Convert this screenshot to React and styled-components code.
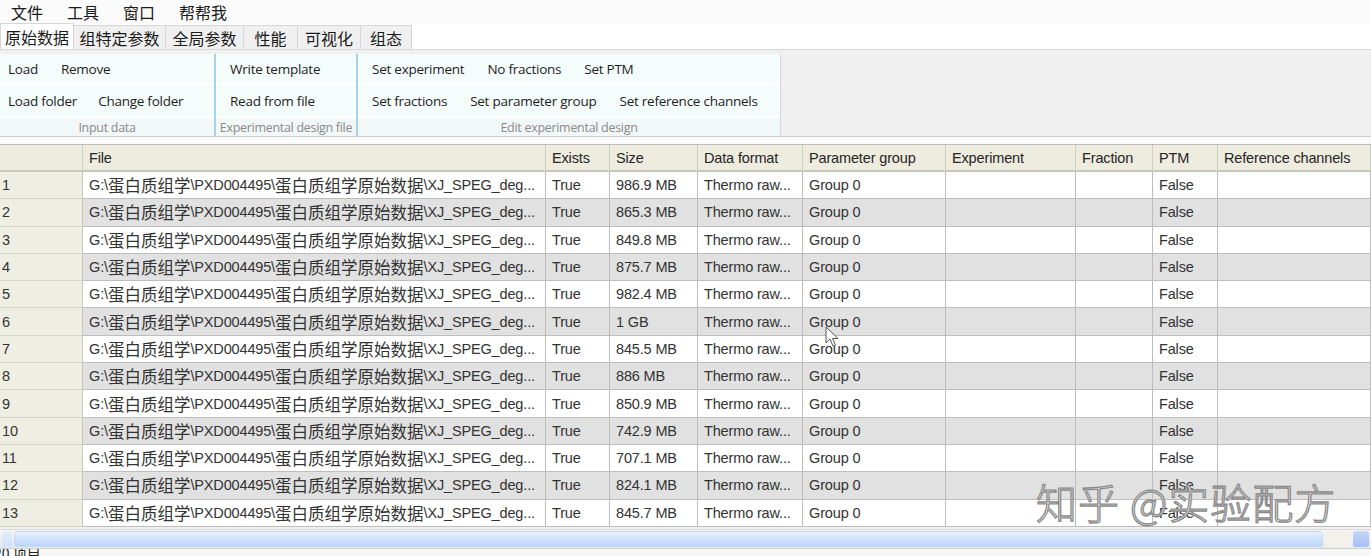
import styled, { createGlobalStyle } from 'styled-components';

const GlobalStyle = createGlobalStyle`
  html, body {
    margin: 0;
    padding: 0;
    overflow: hidden;
    background: #f0f0f0;
  }
  * { box-sizing: border-box; }
  body {
    font-family: "Liberation Sans", "Noto Sans CJK SC", sans-serif;
    color: #222;
  }
`;

const Window = styled.div`
  width: 1371px;
  height: 556px;
  display: flex;
  flex-direction: column;
  position: relative;
  overflow: hidden;
  background: #f0f0f0;
`;

const MenuBar = styled.div`
  height: 24px;
  display: flex;
  align-items: center;
  padding-left: 11px;
  gap: 24px;
  background: #fbfbfb;
  font-family: "Noto Sans CJK SC", sans-serif;
  font-size: 16px;
  color: #1a1a1a;
`;

const MenuItem = styled.span`
  line-height: 1;
`;

const TabStrip = styled.div`
  height: 26px;
  display: flex;
  align-items: flex-end;
  background: #fff;
  border-bottom: 1px solid #d8d8d8;
`;

const Tab = styled.div`
  width: ${p => p.$w}px;
  height: ${p => (p.$active ? '26px' : '24px')};
  display: flex;
  align-items: center;
  justify-content: center;
  font-family: "Noto Sans CJK SC", sans-serif;
  font-size: 16px;
  color: #1a1a1a;
  background: ${p => (p.$active ? '#fff' : '#f0f0f0')};
  border: 1px solid #d6d6d6;
  border-bottom: none;
  margin-right: -1px;
  white-space: nowrap;
`;

const Ribbon = styled.div`
  height: 87px;
  display: flex;
  padding-top: 4px;
  background: #f0f0f0;
  border-bottom: 1px solid #cfcfcf;
`;

const Group = styled.div`
  width: ${p => p.$w}px;
  display: flex;
  flex-direction: column;
  background: #f5fcfc;
  border-right: ${p => (p.$last ? '1px solid #d8d8d8' : '2px solid #a9d2e6')};
`;

const ButtonRow = styled.div`
  height: 32px;
  display: flex;
  align-items: center;
  gap: ${p => p.$gap}px;
  padding-left: ${p => p.$pl}px;
  border-bottom: 3px solid #fdfefe;
  font-family: "Open Sans", sans-serif;
  font-size: 13.5px;
  letter-spacing: -0.25px;
  color: #1e1e1e;
  white-space: nowrap;
`;

const GroupLabel = styled.div`
  flex: 1;
  display: flex;
  align-items: center;
  justify-content: center;
  font-family: "Open Sans", sans-serif;
  font-size: 12.5px;
  letter-spacing: -0.3px;
  color: #8a8a8a;
  white-space: nowrap;
  overflow: hidden;
  background: #f2f7f7;
`;

const Gap = styled.div`
  height: 8px;
  background: #fafafa;
  border-bottom: 1px solid #bdbdbd;
`;

const COLS = '83px 463px 64px 88px 105px 143px 130px 77px 65px 153px';

const Grid = styled.div`
  display: grid;
  grid-template-columns: ${COLS};
  grid-template-rows: 27px;
  grid-auto-rows: 27.3px;
  font-family: "Liberation Sans", "Noto Sans CJK SC", sans-serif;
  font-size: 14.5px;
  letter-spacing: -0.15px;
  color: #333;
`;

const HeadCell = styled.div`
  display: flex;
  align-items: center;
  padding-left: 6px;
  background: #eeecde;
  border-right: 1px solid #d0cec0;
  border-bottom: 2px solid #c9c7b8;
  color: #262626;
  white-space: nowrap;
  overflow: hidden;
`;

const RowHead = styled.div`
  display: flex;
  align-items: center;
  padding-left: 2px;
  background: #efeee3;
  border-right: 1px solid #c9c7b8;
  border-bottom: 1px solid #d6d4c6;
  color: #333;
`;

const Cell = styled.div`
  display: flex;
  align-items: center;
  padding-left: 6px;
  background: ${p => (p.$alt ? '#e1e1e1' : '#ffffff')};
  border-right: 1px solid #bdbdbd;
  border-bottom: 1px solid #bdbdbd;
  white-space: nowrap;
  overflow: hidden;
`;

const Cjk = styled.span`
  font-family: "Noto Sans CJK SC", sans-serif;
  font-size: 16.5px;
  letter-spacing: 0;
`;

const ScrollBar = styled.div`
  height: 19px;
  margin-top: 2px;
  display: flex;
  align-items: stretch;
  padding: 1px 2px;
  gap: 2px;
  background: linear-gradient(#f6f6f6, #e9e9e9);
  border-top: 1px solid #d9d9d9;
`;

const ScrollArrow = styled.div`
  width: ${p => p.$w}px;
  border-radius: 2px;
  background: ${p => p.$blue
    ? 'linear-gradient(#c4d6fb, #a8bff2)'
    : 'linear-gradient(#e4eefc, #cfe0f8)'};
`;

const ScrollThumb = styled.div`
  flex: 1;
  border-radius: 3px;
  background: linear-gradient(#e8f2fe, #cfe2fb 50%, #bcd5f8);
  border: 1px solid #c4d8f4;
`;

const ScrollTrack = styled.div`
  width: 26px;
  background: #f2f1ec;
`;

const StatusBar = styled.div`
  flex: 1;
  font-family: "Noto Sans CJK SC", sans-serif;
  font-size: 14px;
  line-height: 14px;
  color: #222;
  background: #f7f7f7;
  border-top: 1px solid #cfcfcf;
  overflow: hidden;
`;

const StatusText = styled.div`
  margin-top: -3px;
  margin-left: -6px;
`;

const Watermark = styled.div`
  position: absolute;
  left: 1036px;
  top: 471px;
  font-family: "Noto Sans CJK SC", sans-serif;
  font-size: 41px;
  font-weight: 300;
  letter-spacing: 1px;
  color: rgba(255, 255, 255, 0.92);
  -webkit-text-stroke: 1.3px #8a8a8a;
  white-space: nowrap;
  pointer-events: none;
`;

const Cursor = styled.svg`
  position: absolute;
  left: 825px;
  top: 326px;
`;

const sizes = ['986.9 MB', '865.3 MB', '849.8 MB', '875.7 MB', '982.4 MB', '1 GB', '845.5 MB',
  '886 MB', '850.9 MB', '742.9 MB', '707.1 MB', '824.1 MB', '845.7 MB'];

const headers = ['', 'File', 'Exists', 'Size', 'Data format', 'Parameter group', 'Experiment',
  'Fraction', 'PTM', 'Reference channels'];

const FilePath = () => (
  <>
    G:\<Cjk>蛋白质组学</Cjk>\PXD004495\<Cjk>蛋白质组学原始数据</Cjk>\XJ_SPEG_deg...
  </>
);

export default function App() {
  return (
    <Window>
      <GlobalStyle />
      <MenuBar>
        <MenuItem>文件</MenuItem>
        <MenuItem>工具</MenuItem>
        <MenuItem>窗口</MenuItem>
        <MenuItem>帮帮我</MenuItem>
      </MenuBar>
      <TabStrip>
        <Tab $active $w={74}>原始数据</Tab>
        <Tab $w={93}>组特定参数</Tab>
        <Tab $w={79}>全局参数</Tab>
        <Tab $w={55}>性能</Tab>
        <Tab $w={64}>可视化</Tab>
        <Tab $w={52}>组态</Tab>
      </TabStrip>
      <Ribbon>
        <Group $w={216}>
          <ButtonRow $pl={8} $gap={23}><span>Load</span><span>Remove</span></ButtonRow>
          <ButtonRow $pl={8} $gap={21}><span>Load folder</span><span>Change folder</span></ButtonRow>
          <GroupLabel>Input data</GroupLabel>
        </Group>
        <Group $w={142}>
          <ButtonRow $pl={14} $gap={0}><span>Write template</span></ButtonRow>
          <ButtonRow $pl={14} $gap={0}><span>Read from file</span></ButtonRow>
          <GroupLabel>Experimental design file</GroupLabel>
        </Group>
        <Group $w={423} $last>
          <ButtonRow $pl={14} $gap={23}><span>Set experiment</span><span>No fractions</span><span>Set PTM</span></ButtonRow>
          <ButtonRow $pl={14} $gap={23}><span>Set fractions</span><span>Set parameter group</span><span>Set reference channels</span></ButtonRow>
          <GroupLabel>Edit experimental design</GroupLabel>
        </Group>
      </Ribbon>
      <Gap />
      <Grid>
        {headers.map((h, i) => <HeadCell key={i}>{h}</HeadCell>)}
        {sizes.map((size, r) => {
          const alt = r % 2 === 1;
          return [
            <RowHead key={`h${r}`}>{r + 1}</RowHead>,
            <Cell key={`f${r}`} $alt={alt}><FilePath /></Cell>,
            <Cell key={`e${r}`} $alt={alt}>True</Cell>,
            <Cell key={`s${r}`} $alt={alt}>{size}</Cell>,
            <Cell key={`d${r}`} $alt={alt}>Thermo raw...</Cell>,
            <Cell key={`g${r}`} $alt={alt}>Group 0</Cell>,
            <Cell key={`x${r}`} $alt={alt} />,
            <Cell key={`r${r}`} $alt={alt} />,
            <Cell key={`p${r}`} $alt={alt}>False</Cell>,
            <Cell key={`c${r}`} $alt={alt} />,
          ];
        })}
      </Grid>
      <ScrollBar>
        <ScrollArrow $w={10} />
        <ScrollThumb />
        <ScrollTrack />
        <ScrollArrow $w={16} $blue />
      </ScrollBar>
      <StatusBar><StatusText>20 项目</StatusText></StatusBar>
      <Watermark>知乎 @实验配方</Watermark>
      <Cursor width="14" height="22" viewBox="0 0 14 22">
        <path d="M1 1 L1 17 L5 13 L8 20 L10.5 19 L7.5 12.5 L13 12.5 Z" fill="#fff" stroke="#555" strokeWidth="1" strokeLinejoin="round" />
      </Cursor>
    </Window>
  );
}
